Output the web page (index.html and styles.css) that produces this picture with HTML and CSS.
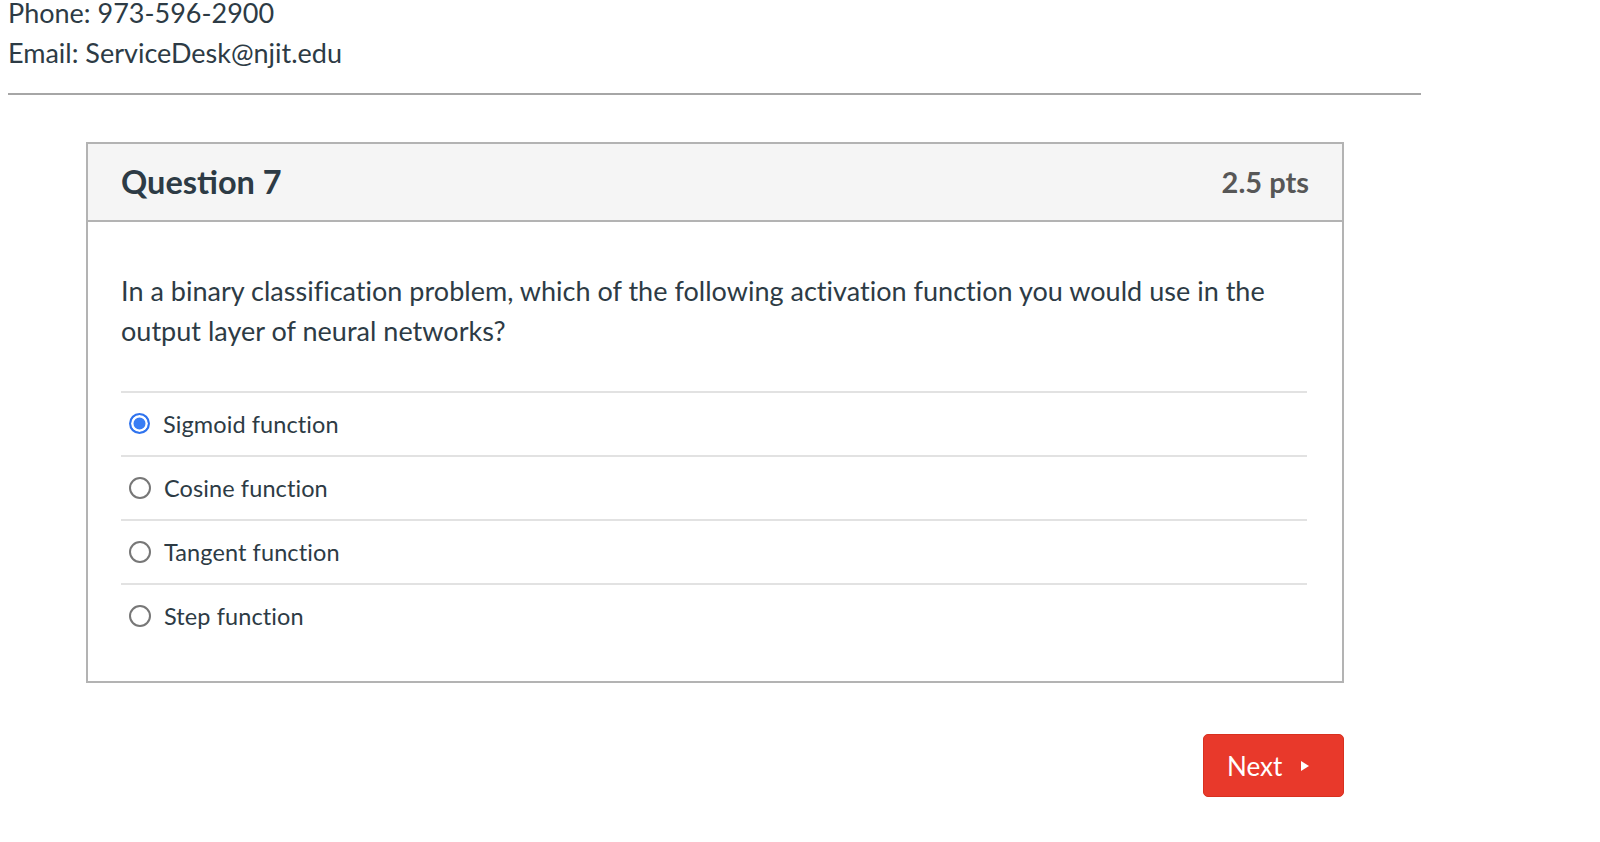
FILE: index.html
```html
<!DOCTYPE html>
<html lang="en">
<head>
<meta charset="utf-8">
<title>Question 7</title>
<link rel="stylesheet" href="styles.css">
</head>
<body>
<div class="page">
  <div class="contact">
    <p>Phone: 973-596-2900</p>
    <p>Email: ServiceDesk@njit.edu</p>
  </div>
  <hr class="rule">
  <div class="question">
    <div class="q-header">
      <h2 class="q-title">Question 7</h2>
      <span class="q-pts">2.5 pts</span>
    </div>
    <div class="q-body">
      <p class="q-text">In a binary classification problem, which of the following activation function you would use in the output layer of neural networks?</p>
      <div class="answers">
        <div class="answer"><span class="radio checked"></span><span class="label">Sigmoid function</span></div>
        <div class="answer"><span class="radio"></span><span class="label">Cosine function</span></div>
        <div class="answer"><span class="radio"></span><span class="label">Tangent function</span></div>
        <div class="answer"><span class="radio"></span><span class="label">Step function</span></div>
      </div>
    </div>
  </div>
  <div class="actions">
    <button class="next">Next <span class="tri"></span></button>
  </div>
</div>
</body>
</html>
```
FILE: styles.css
```css
html, body {
  margin: 0;
  padding: 0;
  background: #fff;
}
body {
  font-family: Lato, "Open Sans", sans-serif;
  color: #2d3b45;
}
.page {
  padding-left: 8px;
  width: 1413px;
}
.contact {
  margin-top: -7px;
}
.contact p {
  margin: 0;
  font-size: 27px;
  line-height: 40px;
}
.rule {
  margin: 20px 0 0;
  border: 0;
  border-top: 2px solid #a6a6a6;
  height: 0;
}
.question {
  margin: 47px 0 0 78px;
  width: 1254px;
  border: 2px solid #b3b3b3;
}
.q-header {
  height: 75px;
  background: #f5f5f5;
  border-bottom: 2px solid #b3b3b3;
  display: flex;
  align-items: center;
  justify-content: space-between;
  padding: 0 33px 1px 33px;
}
.q-title {
  margin: 0;
  font-size: 32.5px;
  font-weight: 700;
  color: #2d3b45;
}
.q-pts {
  font-size: 29px;
  font-weight: 700;
  color: #575757;
}
.q-body {
  padding: 49px 35px 34px 33px;
}
.q-text {
  margin: 0 0 40px;
  font-size: 27px;
  line-height: 40px;
  letter-spacing: 0.02px;
}
.answer {
  height: 61px;
  border-top: 2px solid #e2e2e2;
  display: flex;
  align-items: center;
  padding-left: 8px;
  padding-bottom: 1px;
  gap: 13px;
}
.label {
  font-size: 23.5px;
  letter-spacing: 0.1px;
}
.radio {
  width: 22px;
  height: 22px;
  box-sizing: border-box;
  border: 2px solid #777;
  border-radius: 50%;
  flex: none;
}
.radio.checked {
  width: 21px;
  height: 21px;
  border: 2px solid #2f73ee;
  background: #3a7ef4;
  box-shadow: inset 0 0 0 2.5px #fff;
}
.actions {
  display: flex;
  justify-content: flex-end;
  width: 1336px;
  margin-top: 51px;
}
.next {
  width: 141px;
  height: 63px;
  background: #e8392b;
  border: 1px solid #d8301f;
  border-radius: 5px;
  color: #fff;
  font-family: Lato, "Open Sans", sans-serif;
  font-size: 26px;
  display: flex;
  align-items: center;
  padding: 0 0 0 23px;
  gap: 19px;
}
.tri {
  width: 0;
  height: 0;
  border-left: 8px solid #fff;
  border-top: 5.5px solid transparent;
  border-bottom: 5.5px solid transparent;
}
```
